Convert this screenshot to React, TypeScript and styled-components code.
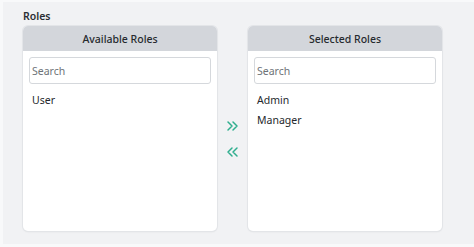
import styled, { createGlobalStyle } from "styled-components";

const GlobalStyle = createGlobalStyle`
  html, body {
    margin: 0;
    padding: 0;
    background: #f8f9fa;
    font-family: "Noto Sans", "Open Sans", sans-serif;
  }
`;

const Page = styled.div`
  margin: 2px 0 0 3px;
  width: 471px;
  height: 242px;
  box-sizing: border-box;
  background: #f1f2f4;
  padding: 7px 0 0 20px;
`;

const Label = styled.div`
  font-size: 10.5px;
  font-weight: 600;
  color: #2b2f33;
  height: 17px;
  line-height: 14px;
`;

const Row = styled.div`
  display: flex;
  align-items: stretch;
`;

const Panel = styled.div`
  width: 194px;
  height: 205px;
  background: #fff;
  border-radius: 5px;
  box-shadow: 0 0 0 1px #e3e5e8, 0 1px 2px rgba(0, 0, 0, 0.08);
  overflow: hidden;
  display: flex;
  flex-direction: column;
`;

const Header = styled.div`
  height: 25px;
  background: #d3d6db;
  display: flex;
  align-items: center;
  justify-content: center;
  font-size: 10.5px;
  font-weight: 500;
  color: #262a2e;
`;

const Body = styled.div`
  padding: 6px 6px;
  display: flex;
  flex-direction: column;
`;

const Search = styled.input`
  height: 27px;
  box-sizing: border-box;
  border: 1px solid #d5d8dc;
  border-radius: 3px;
  padding: 0 2px;
  font-family: inherit;
  font-size: 10.5px;
  color: #333;
  outline: none;
  &::placeholder {
    color: #6e7378;
  }
`;

const List = styled.ul`
  list-style: none;
  margin: 9px 0 0;
  padding: 0 0 0 3px;
  display: flex;
  flex-direction: column;
  gap: 6px;
`;

const Item = styled.li`
  font-size: 10.5px;
  color: #25292d;
  line-height: 14px;
`;

const Arrows = styled.div`
  width: 31px;
  display: flex;
  flex-direction: column;
  align-items: center;
  justify-content: center;
  gap: 14px;
  padding-top: 20px;
  box-sizing: border-box;
`;

const ArrowBtn = styled.button`
  background: none;
  border: none;
  padding: 0;
  color: #2fae8e;
  display: flex;
  cursor: pointer;
`;

function Chevrons({ dir }: { dir: "right" | "left" }) {
  const d =
    dir === "right"
      ? "M2 2 L6 6 L2 10 M7 2 L11 6 L7 10"
      : "M11 2 L7 6 L11 10 M6 2 L2 6 L6 10";
  return (
    <svg width="13" height="12" viewBox="0 0 13 12" fill="none">
      <path d={d} stroke="currentColor" strokeWidth="1.5" strokeLinecap="round" strokeLinejoin="round" />
    </svg>
  );
}

function RolePanel({ title, items }: { title: string; items: string[] }) {
  return (
    <Panel>
      <Header>{title}</Header>
      <Body>
        <Search placeholder="Search" />
        <List>
          {items.map((it) => (
            <Item key={it}>{it}</Item>
          ))}
        </List>
      </Body>
    </Panel>
  );
}

export default function App() {
  return (
    <>
      <GlobalStyle />
      <Page>
        <Label>Roles</Label>
        <Row>
          <RolePanel title="Available Roles" items={["User"]} />
          <Arrows>
            <ArrowBtn>
              <Chevrons dir="right" />
            </ArrowBtn>
            <ArrowBtn>
              <Chevrons dir="left" />
            </ArrowBtn>
          </Arrows>
          <RolePanel title="Selected Roles" items={["Admin", "Manager"]} />
        </Row>
      </Page>
    </>
  );
}
